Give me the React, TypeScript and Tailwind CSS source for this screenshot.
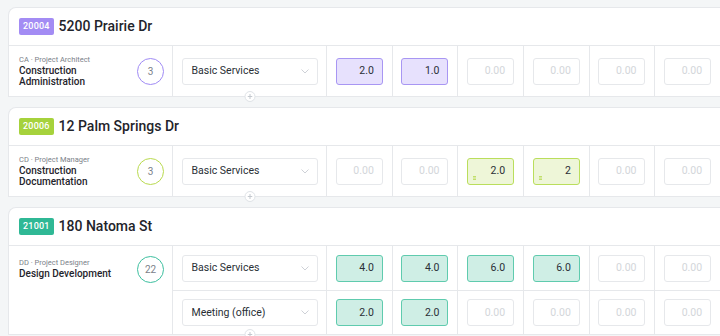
import React from 'react';

type Tone = 'purple' | 'lime' | 'teal';

const tones: Record<Tone, { badge: string; ring: string; box: string; mark: string }> = {
  purple: {
    badge: 'bg-[#a38cf4]',
    ring: 'border-[#a08bf5]',
    box: 'bg-[#e7e1fd] border-[#a896f3]',
    mark: '',
  },
  lime: {
    badge: 'bg-[#a6d23c]',
    ring: 'border-[#b9da4e]',
    box: 'bg-[#eef6d8] border-[#bade5c]',
    mark: 'text-[#b5d94f]',
  },
  teal: {
    badge: 'bg-[#2fb895]',
    ring: 'border-[#3dbf9f]',
    box: 'bg-[#cfeee5] border-[#5fcbae]',
    mark: '',
  },
};

type Row = { service: string; values: (string | null)[]; plus?: boolean };

type Project = {
  code: string;
  title: string;
  tone: Tone;
  phase: string;
  role: string;
  name: string[];
  count: string;
  rows: Row[];
  marks?: boolean;
};

const projects: Project[] = [
  {
    code: '20004',
    title: '5200 Prairie Dr',
    tone: 'purple',
    phase: 'CA',
    role: 'Project Architect',
    name: ['Construction', 'Administration'],
    count: '3',
    rows: [{ service: 'Basic Services', values: ['2.0', '1.0', null, null, null, null], plus: true }],
  },
  {
    code: '20006',
    title: '12 Palm Springs Dr',
    tone: 'lime',
    phase: 'CD',
    role: 'Project Manager',
    name: ['Construction', 'Documentation'],
    count: '3',
    marks: true,
    rows: [{ service: 'Basic Services', values: [null, null, '2.0', '2', null, null], plus: true }],
  },
  {
    code: '21001',
    title: '180 Natoma St',
    tone: 'teal',
    phase: 'DD',
    role: 'Project Designer',
    name: ['Design Development'],
    count: '22',
    rows: [
      { service: 'Basic Services', values: ['4.0', '4.0', '6.0', '6.0', null, null] },
      { service: 'Meeting (office)', values: ['2.0', '2.0', null, null, null, null], plus: true },
    ],
  },
];

function Chevron() {
  return (
    <svg width="8" height="5" viewBox="0 0 8 5" className="text-[#c8ccd2]">
      <path d="M0.5 0.5 L4 4 L7.5 0.5" fill="none" stroke="currentColor" strokeWidth="0.9" />
    </svg>
  );
}

function PlusDot() {
  return (
    <div className="absolute left-1/2 bottom-[-6px] -translate-x-1/2 w-[11px] h-[11px] rounded-full bg-white border border-[#dfe3e7] flex items-center justify-center z-10">
      <svg width="5" height="5" viewBox="0 0 5 5" className="text-[#c3c8ce]">
        <path d="M2.5 0 V5 M0 2.5 H5" stroke="currentColor" strokeWidth="1" />
      </svg>
    </div>
  );
}

function ValueBox({ value, tone, mark }: { value: string | null; tone: Tone; mark?: boolean }) {
  if (!value) {
    return (
      <div className="w-[47px] h-[27px] rounded-[3px] border border-[#e6e8eb] bg-white flex items-center justify-end pr-[8px] text-[10.5px] text-[#d3d6da]">
        0.00
      </div>
    );
  }
  return (
    <div className={`relative w-[47px] h-[27px] rounded-[3px] border ${tones[tone].box} flex items-center justify-end pr-[8px] text-[10.5px] text-[#2a2f36]`}>
      {mark && (
        <svg width="3" height="4" viewBox="0 0 3 4" className={`absolute left-[5px] bottom-[4px] ${tones[tone].mark}`}>
          <path d="M0 0.5 H3 M0 2 H3 M0 3.5 H3" stroke="currentColor" strokeWidth="0.8" />
        </svg>
      )}
      {value}
    </div>
  );
}

function Card({ p }: { p: Project }) {
  const t = tones[p.tone];
  const multi = p.rows.length > 1;
  const rowH = multi ? 'h-[44px]' : 'h-[50px]';
  return (
    <div className="w-[712px] bg-white border-l border-t border-b border-[#e6e8eb] rounded-tl-[8px]">
      <div className="h-[38px] flex items-center pl-[10px] gap-[5px] border-b border-[#e6e8eb]">
        <span className={`${t.badge} text-white text-[9px] font-medium rounded-[2px] h-[17px] px-[4px] flex items-center tracking-[0.2px]`}>
          {p.code}
        </span>
        <span className="text-[14px] font-medium text-[#1f242b]">{p.title}</span>
      </div>
      <div className="grid grid-cols-[164px_154px_repeat(6,65.67px)]">
        <div className={`${multi ? 'row-span-2 items-start pt-[12px]' : 'items-center'} flex justify-between pl-[10px] pr-[8px] border-r border-[#e6e8eb]`}>
          <div className="flex flex-col">
            <span className="text-[7.5px] text-[#7b8189] leading-[10px]">
              {p.phase} · {p.role}
            </span>
            {p.name.map((n) => (
              <span key={n} className="text-[10px] font-medium text-[#1f242b] leading-[11.5px]">
                {n}
              </span>
            ))}
          </div>
          <div className={`w-[27px] h-[27px] rounded-full border-[1.5px] ${t.ring} flex items-center justify-center text-[10px] text-[#7b8189] ${multi ? '-mt-[2px]' : ''}`}>
            {p.count}
          </div>
        </div>
        {p.rows.map((r, ri) => (
          <React.Fragment key={r.service}>
            <div className={`relative ${rowH} flex items-center justify-center border-r border-[#e6e8eb] ${ri > 0 ? 'border-t' : ''}`}>
              <div className="w-[136px] h-[27px] rounded-[3px] border border-[#e6e8eb] bg-white flex items-center justify-between pl-[9px] pr-[8px]">
                <span className="text-[10.5px] text-[#2a2f36]">{r.service}</span>
                <Chevron />
              </div>
              {r.plus && <PlusDot />}
            </div>
            {r.values.map((v, vi) => (
              <div
                key={vi}
                className={`${rowH} flex items-center justify-center border-r border-[#e6e8eb] ${ri > 0 ? 'border-t' : ''}`}
              >
                <ValueBox value={v} tone={p.tone} mark={p.marks} />
              </div>
            ))}
          </React.Fragment>
        ))}
      </div>
    </div>
  );
}

export default function App() {
  return (
    <div
      className="w-[720px] h-[336px] overflow-hidden bg-[#f4f6f7] pt-[7px] pl-[8px] flex flex-col gap-[10px]"
      style={{ fontFamily: 'Roboto, "Liberation Sans", sans-serif' }}
    >
      {projects.map((p) => (
        <Card key={p.code} p={p} />
      ))}
    </div>
  );
}
